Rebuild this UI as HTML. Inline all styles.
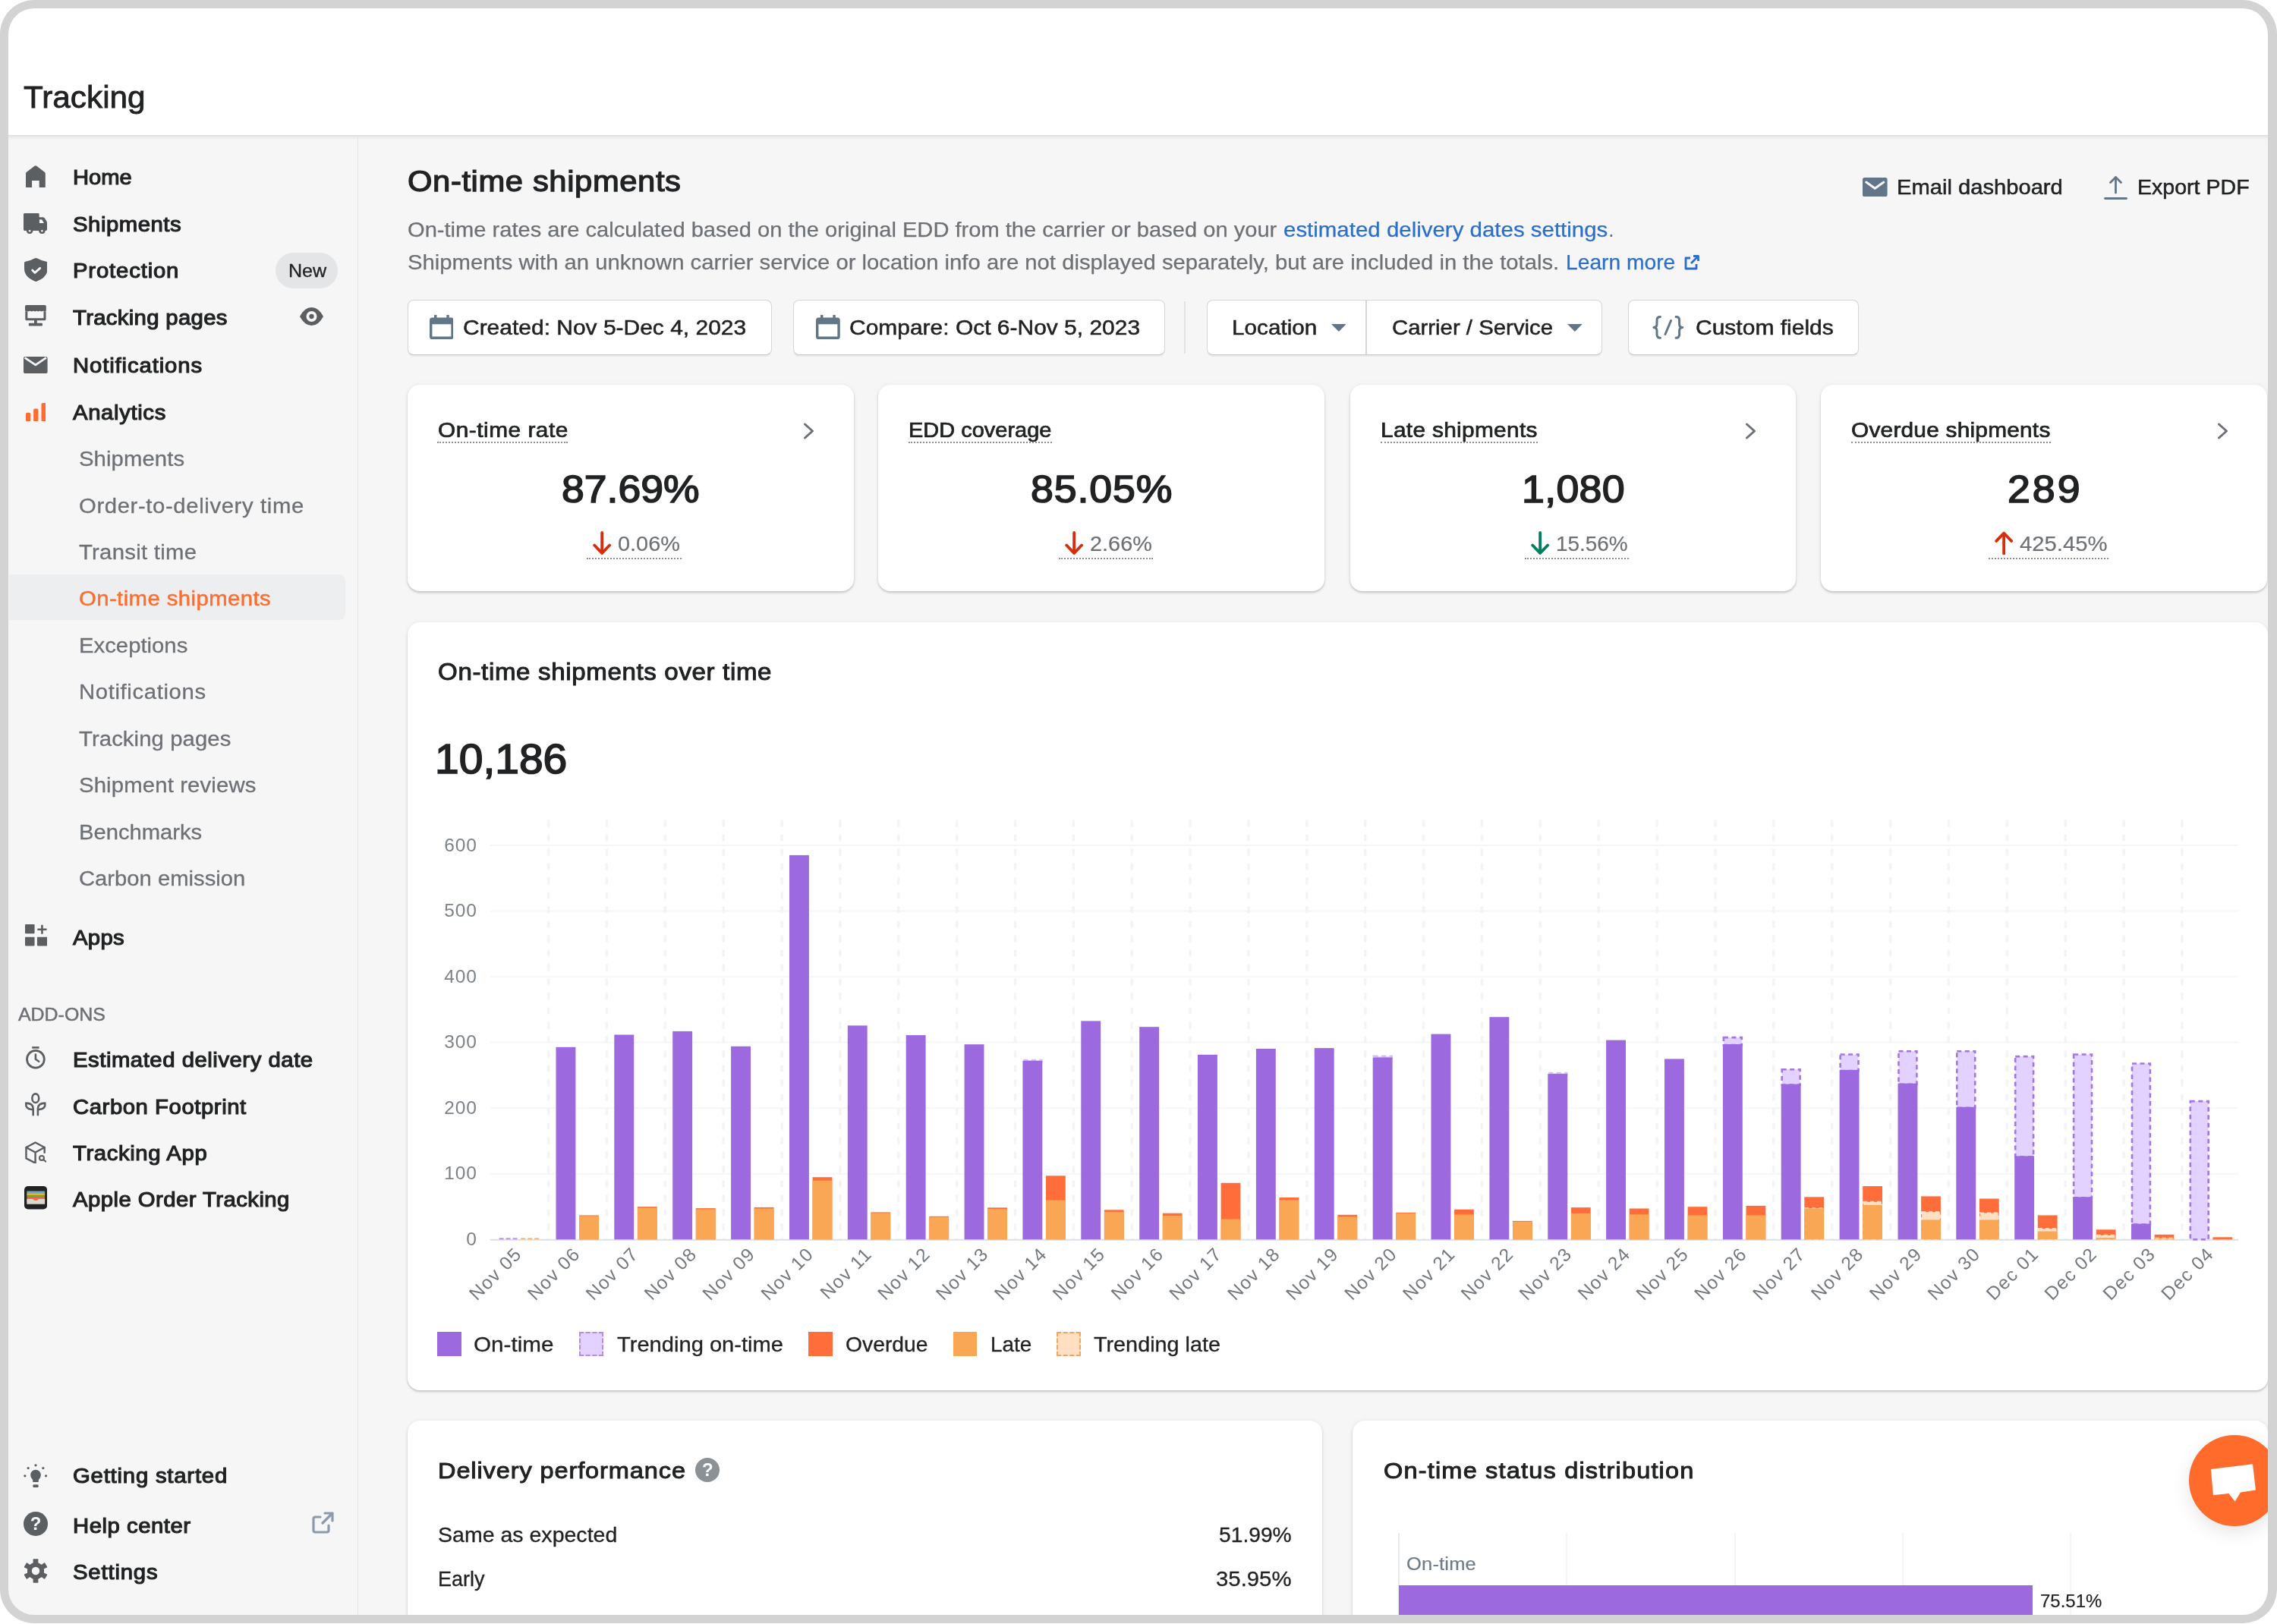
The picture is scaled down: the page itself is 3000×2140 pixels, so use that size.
<!DOCTYPE html>
<html lang="en"><head><meta charset="utf-8"><title>Tracking - On-time shipments</title>
<style>
html,body{margin:0;padding:0}
body{width:3000px;height:2140px;position:relative;overflow:hidden;background:#fff;font-family:"Liberation Sans", sans-serif;}
#app{position:absolute;left:0;top:0;width:3000px;height:2140px;overflow:hidden;background:#f6f6f7;will-change:transform}
#frame{position:absolute;left:0;top:0;width:3000px;height:2139px;box-sizing:border-box;border:solid #d3d3d3;border-width:11.3px 12px 11px 11.3px;border-radius:45px;box-shadow:0 0 0 60px #fff;pointer-events:none}
.card{position:absolute;background:#fff;border-radius:16px;box-shadow:0 0 6px rgba(23,24,24,.06),0 2px 3px rgba(0,0,0,.18)}
.btn{position:absolute;background:#fff;border:1.6px solid #d3d6da;border-bottom-color:#c3c7cc;box-sizing:border-box;border-radius:8px;box-shadow:0 2px 1px rgba(0,0,0,.05)}
</style></head><body>
<div id="app">
<div style="position:absolute;left:0.0px;top:0.0px;width:3000.0px;height:178.0px;background:#fff;box-shadow:0 1px 0 #dcdcdc,0 3px 5px rgba(0,0,0,.08)"></div>
<span style="position:absolute;white-space:pre;left:31.4px;top:103.7px;font-size:40px;line-height:48.00px;font-weight:400;color:#202223;letter-spacing:0.000px;-webkit-text-stroke:0.8px #202223;transform:scaleX(1.0572);transform-origin:0 50%;">Tracking</span>
<div style="position:absolute;left:470.6px;top:180.0px;width:1.6px;height:1960.0px;background:#e3e5e8"></div>
<div style="position:absolute;left:12.0px;top:757.0px;width:442.6px;height:59.6px;background:#edeeef;border-radius:0 8px 8px 0"></div>
<span style="position:absolute;white-space:pre;left:95.8px;top:218.3px;font-size:27px;line-height:32.40px;font-weight:400;color:#202223;letter-spacing:0.000px;-webkit-text-stroke:1.1px #202223;transform:scaleX(1.0787);transform-origin:0 50%;">Home</span>
<span style="position:absolute;white-space:pre;left:95.8px;top:279.7px;font-size:27px;line-height:32.40px;font-weight:400;color:#202223;letter-spacing:0.481px;-webkit-text-stroke:1.1px #202223;transform:scaleX(1.0850);transform-origin:0 50%;">Shipments</span>
<span style="position:absolute;white-space:pre;left:95.8px;top:341.1px;font-size:27px;line-height:32.40px;font-weight:400;color:#202223;letter-spacing:0.767px;-webkit-text-stroke:1.1px #202223;transform:scaleX(1.0850);transform-origin:0 50%;">Protection</span>
<span style="position:absolute;white-space:pre;left:95.8px;top:402.5px;font-size:27px;line-height:32.40px;font-weight:400;color:#202223;letter-spacing:0.297px;-webkit-text-stroke:1.1px #202223;transform:scaleX(1.0850);transform-origin:0 50%;">Tracking pages</span>
<span style="position:absolute;white-space:pre;left:95.8px;top:466.1px;font-size:27px;line-height:32.40px;font-weight:400;color:#202223;letter-spacing:0.808px;-webkit-text-stroke:1.1px #202223;transform:scaleX(1.0850);transform-origin:0 50%;">Notifications</span>
<span style="position:absolute;white-space:pre;left:95.8px;top:527.6px;font-size:27px;line-height:32.40px;font-weight:400;color:#202223;letter-spacing:0.584px;-webkit-text-stroke:1.1px #202223;transform:scaleX(1.0850);transform-origin:0 50%;">Analytics</span>
<span style="position:absolute;white-space:pre;left:103.7px;top:589.0px;font-size:27px;line-height:32.40px;font-weight:400;color:#6d7175;letter-spacing:0.078px;-webkit-text-stroke:0.3px #6d7175;transform:scaleX(1.0850);transform-origin:0 50%;">Shipments</span>
<span style="position:absolute;white-space:pre;left:103.7px;top:650.5px;font-size:27px;line-height:32.40px;font-weight:400;color:#6d7175;letter-spacing:0.568px;-webkit-text-stroke:0.3px #6d7175;transform:scaleX(1.0850);transform-origin:0 50%;">Order-to-delivery time</span>
<span style="position:absolute;white-space:pre;left:103.7px;top:711.9px;font-size:27px;line-height:32.40px;font-weight:400;color:#6d7175;letter-spacing:0.257px;-webkit-text-stroke:0.3px #6d7175;transform:scaleX(1.0850);transform-origin:0 50%;">Transit time</span>
<span style="position:absolute;white-space:pre;left:103.7px;top:773.4px;font-size:27px;line-height:32.40px;font-weight:400;color:#ff6d2e;letter-spacing:0.390px;-webkit-text-stroke:0.5px #ff6d2e;transform:scaleX(1.0850);transform-origin:0 50%;">On-time shipments</span>
<span style="position:absolute;white-space:pre;left:103.7px;top:834.8px;font-size:27px;line-height:32.40px;font-weight:400;color:#6d7175;letter-spacing:0.000px;-webkit-text-stroke:0.3px #6d7175;transform:scaleX(1.0850);transform-origin:0 50%;">Exceptions</span>
<span style="position:absolute;white-space:pre;left:103.7px;top:896.3px;font-size:27px;line-height:32.40px;font-weight:400;color:#6d7175;letter-spacing:0.578px;-webkit-text-stroke:0.3px #6d7175;transform:scaleX(1.0850);transform-origin:0 50%;">Notifications</span>
<span style="position:absolute;white-space:pre;left:103.7px;top:957.7px;font-size:27px;line-height:32.40px;font-weight:400;color:#6d7175;letter-spacing:0.084px;-webkit-text-stroke:0.3px #6d7175;transform:scaleX(1.0850);transform-origin:0 50%;">Tracking pages</span>
<span style="position:absolute;white-space:pre;left:103.7px;top:1019.2px;font-size:27px;line-height:32.40px;font-weight:400;color:#6d7175;letter-spacing:0.135px;-webkit-text-stroke:0.3px #6d7175;transform:scaleX(1.0850);transform-origin:0 50%;">Shipment reviews</span>
<span style="position:absolute;white-space:pre;left:103.7px;top:1080.6px;font-size:27px;line-height:32.40px;font-weight:400;color:#6d7175;letter-spacing:0.000px;-webkit-text-stroke:0.3px #6d7175;transform:scaleX(1.0809);transform-origin:0 50%;">Benchmarks</span>
<span style="position:absolute;white-space:pre;left:103.7px;top:1142.1px;font-size:27px;line-height:32.40px;font-weight:400;color:#6d7175;letter-spacing:0.000px;-webkit-text-stroke:0.3px #6d7175;transform:scaleX(1.0825);transform-origin:0 50%;">Carbon emission</span>
<span style="position:absolute;white-space:pre;left:95.8px;top:1219.7px;font-size:27px;line-height:32.40px;font-weight:400;color:#202223;letter-spacing:0.252px;-webkit-text-stroke:1.1px #202223;transform:scaleX(1.0850);transform-origin:0 50%;">Apps</span>
<span style="position:absolute;white-space:pre;left:23.8px;top:1322.6px;font-size:23.5px;line-height:28.20px;font-weight:400;color:#6d7175;letter-spacing:0.000px;-webkit-text-stroke:0.5px #6d7175;transform:scaleX(1.0602);transform-origin:0 50%;">ADD-ONS</span>
<span style="position:absolute;white-space:pre;left:95.8px;top:1381.2px;font-size:27px;line-height:32.40px;font-weight:400;color:#202223;letter-spacing:0.486px;-webkit-text-stroke:1.1px #202223;transform:scaleX(1.0850);transform-origin:0 50%;">Estimated delivery date</span>
<span style="position:absolute;white-space:pre;left:95.8px;top:1442.6px;font-size:27px;line-height:32.40px;font-weight:400;color:#202223;letter-spacing:0.514px;-webkit-text-stroke:1.1px #202223;transform:scaleX(1.0850);transform-origin:0 50%;">Carbon Footprint</span>
<span style="position:absolute;white-space:pre;left:95.8px;top:1503.6px;font-size:27px;line-height:32.40px;font-weight:400;color:#202223;letter-spacing:0.569px;-webkit-text-stroke:1.1px #202223;transform:scaleX(1.0850);transform-origin:0 50%;">Tracking App</span>
<span style="position:absolute;white-space:pre;left:95.8px;top:1565.0px;font-size:27px;line-height:32.40px;font-weight:400;color:#202223;letter-spacing:0.417px;-webkit-text-stroke:1.1px #202223;transform:scaleX(1.0850);transform-origin:0 50%;">Apple Order Tracking</span>
<span style="position:absolute;white-space:pre;left:95.8px;top:1929.1px;font-size:27px;line-height:32.40px;font-weight:400;color:#202223;letter-spacing:0.727px;-webkit-text-stroke:1.1px #202223;transform:scaleX(1.0850);transform-origin:0 50%;">Getting started</span>
<span style="position:absolute;white-space:pre;left:95.8px;top:1995.0px;font-size:27px;line-height:32.40px;font-weight:400;color:#202223;letter-spacing:0.478px;-webkit-text-stroke:1.1px #202223;transform:scaleX(1.0850);transform-origin:0 50%;">Help center</span>
<span style="position:absolute;white-space:pre;left:95.8px;top:2056.0px;font-size:27px;line-height:32.40px;font-weight:400;color:#202223;letter-spacing:0.756px;-webkit-text-stroke:1.1px #202223;transform:scaleX(1.0850);transform-origin:0 50%;">Settings</span>
<div style="position:absolute;left:363.2px;top:333.2px;width:82.3px;height:47.3px;background:#e4e5e7;border-radius:24px"></div>
<span style="position:absolute;white-space:pre;left:379.6px;top:343.1px;font-size:24px;line-height:28.80px;font-weight:400;color:#202223;letter-spacing:0.000px;-webkit-text-stroke:0.3px #202223;transform:scaleX(1.0455);transform-origin:0 50%;">New</span>
<svg style="position:absolute;left:34.2px;top:217.7px;" width="25.8" height="29.6" viewBox="0 0 175 200" preserveAspectRatio="none"><path fill="#5c5f62" d="M78 5 Q87.5 -3 97 5 L170 60 Q175 64 175 72 V188 Q175 200 163 200 H120 V135 H55 V200 H12 Q0 200 0 188 V72 Q0 64 5 60 Z"/></svg>
<svg style="position:absolute;left:31.2px;top:280.5px;" width="31.0" height="27.4" viewBox="0 0 210 185" preserveAspectRatio="none"><path fill="#5c5f62" d="M10 0 H130 Q140 0 140 10 V35 H170 Q182 35 190 45 L205 70 Q210 78 210 88 V145 Q210 155 200 155 H194 A29 29 0 0 1 136 155 H84 A29 29 0 0 1 26 155 H10 Q0 155 0 145 V10 Q0 0 10 0 Z M142 56 V88 H182 L168 62 Q165 56 158 56 Z"/><circle cx="55" cy="157" r="9" fill="#f6f6f7"/><circle cx="165" cy="157" r="9" fill="#f6f6f7"/></svg>
<svg style="position:absolute;left:31.5px;top:339.6px;" width="30.7" height="31.1" viewBox="0 0 210 210" preserveAspectRatio="none"><path fill="#5c5f62" d="M105 0 Q112 0 118 4 Q160 28 200 32 Q210 33 210 44 V95 Q210 170 112 208 Q105 211 98 208 Q0 170 0 95 V44 Q0 33 10 32 Q50 28 92 4 Q98 0 105 0 Z"/><path d="M73 108 L96 131 L142 90" fill="none" stroke="#f6f6f7" stroke-width="19" stroke-linecap="round" stroke-linejoin="round"/></svg>
<svg style="position:absolute;left:33.1px;top:402.1px;" width="27.8" height="29.1" viewBox="0 0 185 195" preserveAspectRatio="none"><path fill="#5c5f62" d="M12 0 H173 Q185 0 185 12 V50 Q175 62 160 50 Q146 62 131 50 Q116 62 102 50 Q88 62 73 50 Q58 62 44 50 Q30 62 0 50 V12 Q0 0 12 0 Z"/><path fill="none" stroke="#5c5f62" stroke-width="20" stroke-linejoin="round" d="M12 55 V125 H173 V55"/><rect x="80" y="125" width="25" height="40" fill="#5c5f62"/><rect x="32" y="160" width="121" height="24" rx="8" fill="#5c5f62"/></svg>
<svg style="position:absolute;left:31.0px;top:469.6px;" width="31.6" height="22.1" viewBox="0 0 150 105" preserveAspectRatio="none"><rect x="0" y="0" width="150" height="105" rx="10" fill="#5c5f62"/><path d="M8 6 L75 52 L142 6" fill="none" stroke="#f6f6f7" stroke-width="13" stroke-linejoin="round"/></svg>
<svg style="position:absolute;left:33.7px;top:530.7px;" width="26.8" height="24.3" viewBox="0 0 127 115" preserveAspectRatio="none"><rect x="0" y="60" width="30" height="55" rx="9" fill="#ff6d2e"/><rect x="48" y="35" width="30" height="80" rx="9" fill="#ff6d2e"/><rect x="97" y="0" width="30" height="115" rx="9" fill="#ff6d2e"/></svg>
<svg style="position:absolute;left:395.2px;top:404.9px;" width="31.0" height="24.0" viewBox="0 0 147 114" preserveAspectRatio="none"><path fill="#5c5f62" d="M0 57 Q30 0 73.5 0 Q117 0 147 57 Q117 114 73.5 114 Q30 114 0 57 Z"/><circle cx="73.5" cy="57" r="33" fill="#f6f6f7"/><circle cx="73.5" cy="57" r="15" fill="#5c5f62"/></svg>
<svg style="position:absolute;left:32.6px;top:1218.3px;" width="29.2" height="28.4" viewBox="0 0 216 210" preserveAspectRatio="none"><rect x="0" y="0" width="93" height="90" rx="6" fill="#5c5f62"/><rect x="0" y="123" width="93" height="87" rx="6" fill="#5c5f62"/><rect x="118" y="123" width="98" height="87" rx="6" fill="#5c5f62"/><path d="M166 5 V95 M121 50 H211" stroke="#5c5f62" stroke-width="19" fill="none"/></svg>
<svg style="position:absolute;left:33.3px;top:1378.0px;" width="28.0" height="32.0" viewBox="0 0 28 32" preserveAspectRatio="none"><circle cx="13.9" cy="17.7" r="11.4" fill="none" stroke="#5c5f62" stroke-width="2.8"/><path d="M9.2 2.4 H18.6" stroke="#5c5f62" stroke-width="2.6" fill="none"/><path d="M13.9 11.5 V17.7 L18.2 20.8" stroke="#5c5f62" stroke-width="2.6" fill="none" stroke-linecap="round" stroke-linejoin="round"/></svg>
<svg style="position:absolute;left:32.3px;top:1440.3px;" width="29.6" height="30.5" viewBox="0 0 240 247" preserveAspectRatio="none"><g fill="none" stroke="#5c5f62" stroke-width="21" stroke-linecap="round" stroke-linejoin="round"><ellipse cx="120" cy="58" rx="36" ry="47"/><path d="M95 237 V170 Q95 110 18 110 Q12 175 80 178"/><path d="M145 237 V170 Q145 110 222 110 Q228 175 160 178"/></g></svg>
<svg style="position:absolute;left:32.9px;top:1503.5px;" width="28.4" height="29.8" viewBox="0 0 230 242" preserveAspectRatio="none"><g fill="none" stroke="#5c5f62" stroke-width="20" stroke-linecap="round" stroke-linejoin="round"><path d="M110 232 L12 182 V65 L110 12 L208 65 V120"/><path d="M12 65 L110 118 L208 65 M110 118 V232"/><circle cx="178" cy="178" r="24" stroke-width="17"/><path d="M197 197 L222 216" stroke-width="17"/></g></svg>
<svg style="position:absolute;left:31.7px;top:1563.2px;" width="30.2" height="30.5" viewBox="0 0 245 248" preserveAspectRatio="none"><rect x="0" y="0" width="245" height="248" rx="40" fill="#222"/><rect x="27" y="53" width="193" height="30" fill="#6fa8c7"/><rect x="27" y="78" width="193" height="24" fill="#e5b521"/><rect x="27" y="100" width="193" height="20" fill="#7aa83c"/><rect x="27" y="118" width="193" height="50" fill="#f06a55"/><path d="M27 138 H85 Q95 138 100 146 Q123 165 146 146 Q151 138 161 138 H220 V193 H27 Z" fill="#dcd8cc"/></svg>
<svg style="position:absolute;left:31.1px;top:1928.5px;" width="31.4" height="31.8" viewBox="0 0 255 258" preserveAspectRatio="none"><path fill="#5c5f62" d="M130 62 A56 56 0 0 1 186 118 Q186 145 165 165 Q160 172 160 195 H100 Q100 172 95 165 Q74 145 74 118 A56 56 0 0 1 130 62 Z"/><rect x="100" y="222" width="60" height="30" rx="12" fill="#5c5f62"/><g fill="#5c5f62"><circle cx="130" cy="15" r="13"/><circle cx="50" cy="45" r="13"/><circle cx="210" cy="45" r="13"/><circle cx="15" cy="128" r="13"/><circle cx="240" cy="128" r="13"/></g></svg>
<div style="position:absolute;left:31.3px;top:1992.4px;width:31.6px;height:31.6px;border-radius:50%;background:#5c5f62"></div>
<span style="position:absolute;white-space:pre;left:39.8px;top:1994.3px;font-size:24px;line-height:28.80px;font-weight:700;color:#f6f6f7;letter-spacing:0.000px;">?</span>
<svg style="position:absolute;left:31.4px;top:2054.2px;" width="32.0" height="32.0" viewBox="0 0 32 32" preserveAspectRatio="none"><path fill="#5c5f62" stroke="#5c5f62" stroke-width="2" stroke-linejoin="round" d="M13.8 5.7 L13.5 1.2 L18.5 1.2 L18.2 5.7 L23.8 9.0 L27.6 6.4 L30.1 10.8 L26.0 12.7 L26.0 19.3 L30.1 21.2 L27.6 25.6 L23.8 23.0 L18.2 26.3 L18.5 30.8 L13.5 30.8 L13.8 26.3 L8.2 23.0 L4.4 25.6 L1.9 21.2 L6.0 19.3 L6.0 12.7 L1.9 10.8 L4.4 6.4 L8.2 9.0 Z"/><circle cx="16" cy="16" r="5.2" fill="#f6f6f7"/></svg>
<svg style="position:absolute;left:411.4px;top:1992.0px;" width="29.0" height="29.0" viewBox="0 0 29 29" preserveAspectRatio="none"><g fill="none" stroke="#8c9bab" stroke-width="3.2" stroke-linecap="round" stroke-linejoin="round"><path d="M11 7 H4.5 Q2 7 2 9.5 V24.5 Q2 27 4.5 27 H19.5 Q22 27 22 24.5 V18"/><path d="M17 2 H27 V12 M27 2 L14 15"/></g></svg>
<span style="position:absolute;white-space:pre;left:537.3px;top:216.1px;font-size:38.5px;line-height:46.20px;font-weight:400;color:#202223;letter-spacing:0.545px;-webkit-text-stroke:1.25px #202223;transform:scaleX(1.0850);transform-origin:0 50%;">On-time shipments</span>
<span style="position:absolute;white-space:pre;left:537.3px;top:286.1px;font-size:27.5px;line-height:33.00px;font-weight:400;color:#6d7175;letter-spacing:0.000px;-webkit-text-stroke:0.25px #6d7175;transform:scaleX(1.0583);transform-origin:0 50%;">On-time rates are calculated based on the original EDD from the carrier or based on your </span>
<span style="position:absolute;white-space:pre;left:1690.7px;top:286.1px;font-size:27.5px;line-height:33.00px;font-weight:400;color:#2c6ecb;letter-spacing:0.000px;-webkit-text-stroke:0.25px #2c6ecb;transform:scaleX(1.0711);transform-origin:0 50%;">estimated delivery dates settings</span>
<span style="position:absolute;white-space:pre;left:2119.0px;top:286.1px;font-size:27.5px;line-height:33.00px;font-weight:400;color:#6d7175;letter-spacing:0.000px;">.</span>
<span style="position:absolute;white-space:pre;left:537.3px;top:329.2px;font-size:27.5px;line-height:33.00px;font-weight:400;color:#6d7175;letter-spacing:0.000px;-webkit-text-stroke:0.25px #6d7175;transform:scaleX(1.0642);transform-origin:0 50%;">Shipments with an unknown carrier service or location info are not displayed separately, but are included in the totals. </span>
<span style="position:absolute;white-space:pre;left:2062.7px;top:329.2px;font-size:27.5px;line-height:33.00px;font-weight:400;color:#2c6ecb;letter-spacing:0.000px;-webkit-text-stroke:0.25px #2c6ecb;transform:scaleX(1.0260);transform-origin:0 50%;">Learn more</span>
<svg style="position:absolute;left:2219.4px;top:335.5px;" width="20.0" height="20.0" viewBox="0 0 20 20" preserveAspectRatio="none"><g fill="none" stroke="#2c6ecb" stroke-width="2.8" stroke-linejoin="round"><path d="M8 4 H2 V18 H16 V12"/><path d="M12 1.5 H18.5 V8 M18.5 1.5 L9 11"/></g></svg>
<svg style="position:absolute;left:2454.0px;top:234.0px;" width="32.6" height="25.0" viewBox="0 0 150 115" preserveAspectRatio="none"><rect x="0" y="0" width="150" height="115" rx="12" fill="#637689"/><path d="M22 28 L75 66 L128 28" fill="none" stroke="#f6f6f7" stroke-width="14" stroke-linejoin="round" stroke-linecap="round"/></svg>
<span style="position:absolute;white-space:pre;left:2499.0px;top:230.3px;font-size:27.5px;line-height:33.00px;font-weight:400;color:#202223;letter-spacing:0.000px;-webkit-text-stroke:0.5px #202223;transform:scaleX(1.0602);transform-origin:0 50%;">Email dashboard</span>
<svg style="position:absolute;left:2772.0px;top:230.6px;" width="31.0" height="32.4" viewBox="0 0 31 32.4" preserveAspectRatio="none"><g fill="none" stroke="#637689" stroke-width="2.8" stroke-linecap="round" stroke-linejoin="round"><path d="M15.5 23 V2.5 M8.5 9.5 L15.5 2.5 L22.5 9.5"/><path d="M1.5 30.5 H29.5"/></g></svg>
<span style="position:absolute;white-space:pre;left:2816.0px;top:230.3px;font-size:27.5px;line-height:33.00px;font-weight:400;color:#202223;letter-spacing:0.000px;-webkit-text-stroke:0.5px #202223;transform:scaleX(1.0385);transform-origin:0 50%;">Export PDF</span>
<div class="btn" style="left:536.5px;top:395.0px;width:480.5px;height:72.6px"></div>
<svg style="position:absolute;left:565.5px;top:414.9px;" width="31.8" height="32.0" viewBox="0 0 74 71" preserveAspectRatio="none"><path fill="#637689" d="M14 0 H22 V8 H52 V0 H60 V8 H66 Q74 8 74 16 V63 Q74 71 66 71 H8 Q0 71 0 63 V16 Q0 8 8 8 H14 Z M8 27 V63 H66 V27 Z"/></svg>
<span style="position:absolute;white-space:pre;left:609.8px;top:414.8px;font-size:28px;line-height:33.60px;font-weight:400;color:#202223;letter-spacing:0.000px;-webkit-text-stroke:0.5px #202223;transform:scaleX(1.0704);transform-origin:0 50%;">Created: Nov 5-Dec 4, 2023</span>
<div class="btn" style="left:1045px;top:395.0px;width:490.0px;height:72.6px"></div>
<svg style="position:absolute;left:1074.9px;top:414.9px;" width="31.8" height="32.0" viewBox="0 0 74 71" preserveAspectRatio="none"><path fill="#637689" d="M14 0 H22 V8 H52 V0 H60 V8 H66 Q74 8 74 16 V63 Q74 71 66 71 H8 Q0 71 0 63 V16 Q0 8 8 8 H14 Z M8 27 V63 H66 V27 Z"/></svg>
<span style="position:absolute;white-space:pre;left:1119.2px;top:414.8px;font-size:28px;line-height:33.60px;font-weight:400;color:#202223;letter-spacing:0.000px;-webkit-text-stroke:0.5px #202223;transform:scaleX(1.0703);transform-origin:0 50%;">Compare: Oct 6-Nov 5, 2023</span>
<div style="position:absolute;left:1560.0px;top:397.0px;width:2.0px;height:69.0px;background:#e1e3e5"></div>
<div class="btn" style="left:1589.7px;top:395.0px;width:521.3px;height:72.6px"></div>
<div style="position:absolute;left:1799.3px;top:396.0px;width:1.6px;height:70.6px;background:#d3d6da"></div>
<span style="position:absolute;white-space:pre;left:1622.7px;top:414.8px;font-size:28px;line-height:33.60px;font-weight:400;color:#202223;letter-spacing:0.000px;-webkit-text-stroke:0.5px #202223;transform:scaleX(1.0607);transform-origin:0 50%;">Location</span>
<svg style="position:absolute;left:1753.5px;top:427.3px;" width="19.8" height="10.0" viewBox="0 0 20 10" preserveAspectRatio="none"><path fill="#637689" d="M0 0 H20 L10 10 Z"/></svg>
<span style="position:absolute;white-space:pre;left:1833.5px;top:414.8px;font-size:28px;line-height:33.60px;font-weight:400;color:#202223;letter-spacing:0.000px;-webkit-text-stroke:0.5px #202223;transform:scaleX(1.0486);transform-origin:0 50%;">Carrier / Service</span>
<svg style="position:absolute;left:2065.3px;top:427.3px;" width="19.8" height="10.0" viewBox="0 0 20 10" preserveAspectRatio="none"><path fill="#637689" d="M0 0 H20 L10 10 Z"/></svg>
<div class="btn" style="left:2145px;top:395.0px;width:304.4px;height:72.6px"></div>
<span style="position:absolute;white-space:pre;left:2234.4px;top:414.8px;font-size:28px;line-height:33.60px;font-weight:400;color:#202223;letter-spacing:0.000px;-webkit-text-stroke:0.5px #202223;transform:scaleX(1.0718);transform-origin:0 50%;">Custom fields</span>
<svg style="position:absolute;left:2177.0px;top:416.0px;" width="41.6" height="30.8" viewBox="0 0 41.6 30.8" preserveAspectRatio="none"><g fill="none" stroke="#637689" stroke-width="3" stroke-linecap="round" stroke-linejoin="round"><path d="M10.5 1.5 Q6 1.5 6 6 V11 Q6 15.4 1.8 15.4 Q6 15.4 6 19.8 V24.8 Q6 29.3 10.5 29.3"/><path d="M31.1 1.5 Q35.6 1.5 35.6 6 V11 Q35.6 15.4 39.8 15.4 Q35.6 15.4 35.6 19.8 V24.8 Q35.6 29.3 31.1 29.3"/><path d="M24.5 6.5 L17 24.5"/></g></svg>
<div class="card" style="left:536.6px;top:507.0px;width:588.2px;height:272.0px"></div>
<span style="position:absolute;white-space:pre;left:576.6px;top:549.6px;font-size:27.5px;line-height:33.00px;font-weight:400;color:#202223;letter-spacing:0.459px;-webkit-text-stroke:0.7px #202223;transform:scaleX(1.0850);transform-origin:0 50%;">On-time rate</span>
<div style="position:absolute;left:576.1px;top:582.0px;width:172.3px;height:2.0px;border-top:2px dotted #8c9196;box-sizing:border-box"></div>
<span style="position:absolute;white-space:pre;left:740.0px;top:615.1px;font-size:49.5px;line-height:59.40px;font-weight:400;color:#202223;letter-spacing:0.000px;-webkit-text-stroke:1.55px #202223;transform:scaleX(1.0811);transform-origin:0 50%;">87.69%</span>
<span style="position:absolute;white-space:pre;left:814.0px;top:699.8px;font-size:27.5px;line-height:33.00px;font-weight:400;color:#6d7175;letter-spacing:0.000px;-webkit-text-stroke:0.2px #6d7175;transform:scaleX(1.0515);transform-origin:0 50%;">0.06%</span>
<div style="position:absolute;left:773.0px;top:734.5px;width:124.7px;height:2.0px;border-top:2px dotted #8c9196;box-sizing:border-box"></div>
<svg style="position:absolute;left:781.0px;top:699.8px;" width="24.3" height="31.4" viewBox="0 0 24.3 31.4" preserveAspectRatio="none"><path d="M12.15 2 V28.5 M2.2 18.5 L12.15 28.9 L22.1 18.5" fill="none" stroke="#d82c0d" stroke-width="3.8" stroke-linecap="round" stroke-linejoin="round"/></svg>
<svg style="position:absolute;left:1058.0px;top:557.0px;" width="15.8" height="22.0" viewBox="0 0 15.8 22" preserveAspectRatio="none"><path d="M2.5 2 L12.5 11 L2.5 20" fill="none" stroke="#6d7175" stroke-width="3" stroke-linecap="round" stroke-linejoin="round"/></svg>
<div class="card" style="left:1157.1px;top:507.0px;width:588.3px;height:272.0px"></div>
<span style="position:absolute;white-space:pre;left:1197.1px;top:549.6px;font-size:27.5px;line-height:33.00px;font-weight:400;color:#202223;letter-spacing:0.000px;-webkit-text-stroke:0.7px #202223;transform:scaleX(1.0534);transform-origin:0 50%;">EDD coverage</span>
<div style="position:absolute;left:1196.6px;top:582.0px;width:189.4px;height:2.0px;border-top:2px dotted #8c9196;box-sizing:border-box"></div>
<span style="position:absolute;white-space:pre;left:1358.0px;top:615.1px;font-size:49.5px;line-height:59.40px;font-weight:400;color:#202223;letter-spacing:0.781px;-webkit-text-stroke:1.55px #202223;transform:scaleX(1.0850);transform-origin:0 50%;">85.05%</span>
<span style="position:absolute;white-space:pre;left:1435.5px;top:699.8px;font-size:27.5px;line-height:33.00px;font-weight:400;color:#6d7175;letter-spacing:0.000px;-webkit-text-stroke:0.2px #6d7175;transform:scaleX(1.0502);transform-origin:0 50%;">2.66%</span>
<div style="position:absolute;left:1395.0px;top:734.5px;width:124.1px;height:2.0px;border-top:2px dotted #8c9196;box-sizing:border-box"></div>
<svg style="position:absolute;left:1402.6px;top:699.8px;" width="24.3" height="31.4" viewBox="0 0 24.3 31.4" preserveAspectRatio="none"><path d="M12.15 2 V28.5 M2.2 18.5 L12.15 28.9 L22.1 18.5" fill="none" stroke="#d82c0d" stroke-width="3.8" stroke-linecap="round" stroke-linejoin="round"/></svg>
<div class="card" style="left:1779.0px;top:507.0px;width:587.2px;height:272.0px"></div>
<span style="position:absolute;white-space:pre;left:1819.0px;top:549.6px;font-size:27.5px;line-height:33.00px;font-weight:400;color:#202223;letter-spacing:0.287px;-webkit-text-stroke:0.7px #202223;transform:scaleX(1.0850);transform-origin:0 50%;">Late shipments</span>
<div style="position:absolute;left:1818.5px;top:582.0px;width:207.4px;height:2.0px;border-top:2px dotted #8c9196;box-sizing:border-box"></div>
<span style="position:absolute;white-space:pre;left:2004.8px;top:615.1px;font-size:49.5px;line-height:59.40px;font-weight:400;color:#202223;letter-spacing:0.275px;-webkit-text-stroke:1.55px #202223;transform:scaleX(1.0850);transform-origin:0 50%;">1,080</span>
<span style="position:absolute;white-space:pre;left:2049.8px;top:699.8px;font-size:27.5px;line-height:33.00px;font-weight:400;color:#6d7175;letter-spacing:0.000px;-webkit-text-stroke:0.2px #6d7175;transform:scaleX(1.0152);transform-origin:0 50%;">15.56%</span>
<div style="position:absolute;left:2009.2px;top:734.5px;width:136.8px;height:2.0px;border-top:2px dotted #8c9196;box-sizing:border-box"></div>
<svg style="position:absolute;left:2016.9px;top:699.8px;" width="24.3" height="31.4" viewBox="0 0 24.3 31.4" preserveAspectRatio="none"><path d="M12.15 2 V28.5 M2.2 18.5 L12.15 28.9 L22.1 18.5" fill="none" stroke="#007f5f" stroke-width="3.8" stroke-linecap="round" stroke-linejoin="round"/></svg>
<svg style="position:absolute;left:2299.4px;top:557.0px;" width="15.8" height="22.0" viewBox="0 0 15.8 22" preserveAspectRatio="none"><path d="M2.5 2 L12.5 11 L2.5 20" fill="none" stroke="#6d7175" stroke-width="3" stroke-linecap="round" stroke-linejoin="round"/></svg>
<div class="card" style="left:2399.0px;top:507.0px;width:588.4px;height:272.0px"></div>
<span style="position:absolute;white-space:pre;left:2439.0px;top:549.6px;font-size:27.5px;line-height:33.00px;font-weight:400;color:#202223;letter-spacing:0.206px;-webkit-text-stroke:0.7px #202223;transform:scaleX(1.0850);transform-origin:0 50%;">Overdue shipments</span>
<div style="position:absolute;left:2438.5px;top:582.0px;width:263.3px;height:2.0px;border-top:2px dotted #8c9196;box-sizing:border-box"></div>
<span style="position:absolute;white-space:pre;left:2645.4px;top:615.1px;font-size:49.5px;line-height:59.40px;font-weight:400;color:#202223;letter-spacing:2.758px;-webkit-text-stroke:1.55px #202223;transform:scaleX(1.0850);transform-origin:0 50%;">289</span>
<span style="position:absolute;white-space:pre;left:2660.6px;top:699.8px;font-size:27.5px;line-height:33.00px;font-weight:400;color:#6d7175;letter-spacing:0.000px;-webkit-text-stroke:0.2px #6d7175;transform:scaleX(1.0647);transform-origin:0 50%;">425.45%</span>
<div style="position:absolute;left:2619.8px;top:734.5px;width:157.8px;height:2.0px;border-top:2px dotted #8c9196;box-sizing:border-box"></div>
<svg style="position:absolute;left:2627.5px;top:699.8px;" width="24.3" height="31.4" viewBox="0 0 24.3 31.4" preserveAspectRatio="none"><path d="M12.15 29.4 V2.9 M2.2 12.9 L12.15 2.5 L22.1 12.9" fill="none" stroke="#d82c0d" stroke-width="3.8" stroke-linecap="round" stroke-linejoin="round"/></svg>
<svg style="position:absolute;left:2920.6px;top:557.0px;" width="15.8" height="22.0" viewBox="0 0 15.8 22" preserveAspectRatio="none"><path d="M2.5 2 L12.5 11 L2.5 20" fill="none" stroke="#6d7175" stroke-width="3" stroke-linecap="round" stroke-linejoin="round"/></svg>
<div class="card" style="left:536.6px;top:820px;width:2451.4px;height:1012px"></div>
<span style="position:absolute;white-space:pre;left:576.5px;top:867.1px;font-size:30.5px;line-height:36.60px;font-weight:400;color:#202223;letter-spacing:0.586px;-webkit-text-stroke:0.95px #202223;transform:scaleX(1.0850);transform-origin:0 50%;">On-time shipments over time</span>
<span style="position:absolute;white-space:pre;left:573.0px;top:966.4px;font-size:56px;line-height:67.20px;font-weight:400;color:#202223;letter-spacing:0.000px;-webkit-text-stroke:1.7px #202223;transform:scaleX(1.0176);transform-origin:0 50%;">10,186</span>
<svg style="position:absolute;left:0;top:0" width="3000" height="2140" viewBox="0 0 3000 2140" font-family="Liberation Sans, sans-serif"><path d="M645.7 1546.7 H2949" stroke="#f5f6f8" stroke-width="2" fill="none"/>
<path d="M645.7 1460.2 H2949" stroke="#f5f6f8" stroke-width="2" fill="none"/>
<path d="M645.7 1373.6 H2949" stroke="#f5f6f8" stroke-width="2" fill="none"/>
<path d="M645.7 1287.0 H2949" stroke="#f5f6f8" stroke-width="2" fill="none"/>
<path d="M645.7 1200.4 H2949" stroke="#f5f6f8" stroke-width="2" fill="none"/>
<path d="M645.7 1113.9 H2949" stroke="#f5f6f8" stroke-width="2" fill="none"/>
<path d="M722.6 1080.6 V1633.3" stroke="#f2f4f7" stroke-width="3.5" stroke-dasharray="9 10" fill="none"/>
<path d="M799.4 1080.6 V1633.3" stroke="#f2f4f7" stroke-width="3.5" stroke-dasharray="9 10" fill="none"/>
<path d="M876.3 1080.6 V1633.3" stroke="#f2f4f7" stroke-width="3.5" stroke-dasharray="9 10" fill="none"/>
<path d="M953.2 1080.6 V1633.3" stroke="#f2f4f7" stroke-width="3.5" stroke-dasharray="9 10" fill="none"/>
<path d="M1030.1 1080.6 V1633.3" stroke="#f2f4f7" stroke-width="3.5" stroke-dasharray="9 10" fill="none"/>
<path d="M1106.9 1080.6 V1633.3" stroke="#f2f4f7" stroke-width="3.5" stroke-dasharray="9 10" fill="none"/>
<path d="M1183.8 1080.6 V1633.3" stroke="#f2f4f7" stroke-width="3.5" stroke-dasharray="9 10" fill="none"/>
<path d="M1260.7 1080.6 V1633.3" stroke="#f2f4f7" stroke-width="3.5" stroke-dasharray="9 10" fill="none"/>
<path d="M1337.5 1080.6 V1633.3" stroke="#f2f4f7" stroke-width="3.5" stroke-dasharray="9 10" fill="none"/>
<path d="M1414.4 1080.6 V1633.3" stroke="#f2f4f7" stroke-width="3.5" stroke-dasharray="9 10" fill="none"/>
<path d="M1491.3 1080.6 V1633.3" stroke="#f2f4f7" stroke-width="3.5" stroke-dasharray="9 10" fill="none"/>
<path d="M1568.1 1080.6 V1633.3" stroke="#f2f4f7" stroke-width="3.5" stroke-dasharray="9 10" fill="none"/>
<path d="M1645.0 1080.6 V1633.3" stroke="#f2f4f7" stroke-width="3.5" stroke-dasharray="9 10" fill="none"/>
<path d="M1721.9 1080.6 V1633.3" stroke="#f2f4f7" stroke-width="3.5" stroke-dasharray="9 10" fill="none"/>
<path d="M1798.8 1080.6 V1633.3" stroke="#f2f4f7" stroke-width="3.5" stroke-dasharray="9 10" fill="none"/>
<path d="M1875.6 1080.6 V1633.3" stroke="#f2f4f7" stroke-width="3.5" stroke-dasharray="9 10" fill="none"/>
<path d="M1952.5 1080.6 V1633.3" stroke="#f2f4f7" stroke-width="3.5" stroke-dasharray="9 10" fill="none"/>
<path d="M2029.4 1080.6 V1633.3" stroke="#f2f4f7" stroke-width="3.5" stroke-dasharray="9 10" fill="none"/>
<path d="M2106.2 1080.6 V1633.3" stroke="#f2f4f7" stroke-width="3.5" stroke-dasharray="9 10" fill="none"/>
<path d="M2183.1 1080.6 V1633.3" stroke="#f2f4f7" stroke-width="3.5" stroke-dasharray="9 10" fill="none"/>
<path d="M2260.0 1080.6 V1633.3" stroke="#f2f4f7" stroke-width="3.5" stroke-dasharray="9 10" fill="none"/>
<path d="M2336.8 1080.6 V1633.3" stroke="#f2f4f7" stroke-width="3.5" stroke-dasharray="9 10" fill="none"/>
<path d="M2413.7 1080.6 V1633.3" stroke="#f2f4f7" stroke-width="3.5" stroke-dasharray="9 10" fill="none"/>
<path d="M2490.6 1080.6 V1633.3" stroke="#f2f4f7" stroke-width="3.5" stroke-dasharray="9 10" fill="none"/>
<path d="M2567.4 1080.6 V1633.3" stroke="#f2f4f7" stroke-width="3.5" stroke-dasharray="9 10" fill="none"/>
<path d="M2644.3 1080.6 V1633.3" stroke="#f2f4f7" stroke-width="3.5" stroke-dasharray="9 10" fill="none"/>
<path d="M2721.2 1080.6 V1633.3" stroke="#f2f4f7" stroke-width="3.5" stroke-dasharray="9 10" fill="none"/>
<path d="M2798.1 1080.6 V1633.3" stroke="#f2f4f7" stroke-width="3.5" stroke-dasharray="9 10" fill="none"/>
<path d="M2874.9 1080.6 V1633.3" stroke="#f2f4f7" stroke-width="3.5" stroke-dasharray="9 10" fill="none"/>
<path d="M645.7 1633.8 H2949" stroke="#dde1e6" stroke-width="2" fill="none"/>
<path d="M657.6 1632.3 H681.5" stroke="#9c6ade" stroke-width="2" stroke-dasharray="6 3" opacity=".7"/>
<path d="M686.2 1632.3 H712.0" stroke="#faa755" stroke-width="2" stroke-dasharray="6 3" opacity=".8"/>
<rect x="732.5" y="1379.8" width="25.9" height="253.5" fill="#9c6ade"/>
<rect x="763.1" y="1601.4" width="25.8" height="31.9" fill="#ff6d3b"/>
<rect x="763.1" y="1602.3" width="25.8" height="31.0" fill="#faa755"/>
<rect x="809.3" y="1363.5" width="25.9" height="269.8" fill="#9c6ade"/>
<rect x="839.9" y="1590.2" width="25.8" height="43.1" fill="#ff6d3b"/>
<rect x="839.9" y="1591.7" width="25.8" height="41.6" fill="#faa755"/>
<rect x="886.2" y="1358.9" width="25.9" height="274.4" fill="#9c6ade"/>
<rect x="916.8" y="1592.1" width="25.8" height="41.2" fill="#ff6d3b"/>
<rect x="916.8" y="1593.5" width="25.8" height="39.8" fill="#faa755"/>
<rect x="963.1" y="1378.8" width="25.9" height="254.5" fill="#9c6ade"/>
<rect x="993.7" y="1590.9" width="25.8" height="42.4" fill="#ff6d3b"/>
<rect x="993.7" y="1592.6" width="25.8" height="40.7" fill="#faa755"/>
<rect x="1040.0" y="1126.9" width="25.9" height="506.4" fill="#9c6ade"/>
<rect x="1070.6" y="1551.2" width="25.8" height="82.1" fill="#ff6d3b"/>
<rect x="1070.6" y="1555.7" width="25.8" height="77.6" fill="#faa755"/>
<rect x="1116.8" y="1351.4" width="25.9" height="281.9" fill="#9c6ade"/>
<rect x="1147.4" y="1597.4" width="25.8" height="35.9" fill="#ff6d3b"/>
<rect x="1147.4" y="1598.4" width="25.8" height="34.9" fill="#faa755"/>
<rect x="1193.7" y="1364.1" width="25.9" height="269.2" fill="#9c6ade"/>
<rect x="1224.3" y="1602.8" width="25.8" height="30.5" fill="#ff6d3b"/>
<rect x="1224.3" y="1603.9" width="25.8" height="29.4" fill="#faa755"/>
<rect x="1270.6" y="1376.2" width="25.9" height="257.1" fill="#9c6ade"/>
<rect x="1301.2" y="1591.3" width="25.8" height="42.0" fill="#ff6d3b"/>
<rect x="1301.2" y="1593.0" width="25.8" height="40.3" fill="#faa755"/>
<rect x="1348.4" y="1397.1" width="23.9" height="1.7" fill="#e3d1ff" stroke="#d3bdf7" stroke-width="2.6" stroke-dasharray="6 4.5"/>
<rect x="1347.4" y="1397.8" width="25.9" height="235.5" fill="#9c6ade"/>
<rect x="1378.0" y="1549.3" width="25.8" height="84.0" fill="#ff6d3b"/>
<rect x="1378.0" y="1581.6" width="25.8" height="51.7" fill="#faa755"/>
<rect x="1424.3" y="1345.4" width="25.9" height="287.9" fill="#9c6ade"/>
<rect x="1454.9" y="1594.3" width="25.8" height="39.0" fill="#ff6d3b"/>
<rect x="1454.9" y="1596.9" width="25.8" height="36.4" fill="#faa755"/>
<rect x="1501.2" y="1353.2" width="25.9" height="280.1" fill="#9c6ade"/>
<rect x="1531.8" y="1598.7" width="25.8" height="34.6" fill="#ff6d3b"/>
<rect x="1531.8" y="1602.1" width="25.8" height="31.2" fill="#faa755"/>
<rect x="1578.0" y="1389.8" width="25.9" height="243.5" fill="#9c6ade"/>
<rect x="1608.6" y="1558.8" width="25.8" height="74.5" fill="#ff6d3b"/>
<rect x="1608.6" y="1606.5" width="25.8" height="26.8" fill="#faa755"/>
<rect x="1654.9" y="1382.0" width="25.9" height="251.3" fill="#9c6ade"/>
<rect x="1685.5" y="1578.0" width="25.8" height="55.3" fill="#ff6d3b"/>
<rect x="1685.5" y="1581.4" width="25.8" height="51.9" fill="#faa755"/>
<rect x="1731.8" y="1381.1" width="25.9" height="252.2" fill="#9c6ade"/>
<rect x="1762.4" y="1600.8" width="25.8" height="32.5" fill="#ff6d3b"/>
<rect x="1762.4" y="1603.4" width="25.8" height="29.9" fill="#faa755"/>
<rect x="1809.7" y="1391.9" width="23.9" height="2.6" fill="#e3d1ff" stroke="#d3bdf7" stroke-width="2.6" stroke-dasharray="6 4.5"/>
<rect x="1808.7" y="1393.5" width="25.9" height="239.8" fill="#9c6ade"/>
<rect x="1839.3" y="1597.8" width="25.8" height="35.5" fill="#ff6d3b"/>
<rect x="1839.3" y="1598.7" width="25.8" height="34.6" fill="#faa755"/>
<rect x="1885.5" y="1362.6" width="25.9" height="270.7" fill="#9c6ade"/>
<rect x="1916.1" y="1593.7" width="25.8" height="39.6" fill="#ff6d3b"/>
<rect x="1916.1" y="1600.6" width="25.8" height="32.7" fill="#faa755"/>
<rect x="1962.4" y="1340.2" width="25.9" height="293.1" fill="#9c6ade"/>
<rect x="1993.0" y="1608.9" width="25.8" height="24.4" fill="#ff6d3b"/>
<rect x="1993.0" y="1609.9" width="25.8" height="23.4" fill="#faa755"/>
<rect x="2040.3" y="1414.0" width="23.9" height="2.2" fill="#e3d1ff" stroke="#d3bdf7" stroke-width="2.6" stroke-dasharray="6 4.5"/>
<rect x="2039.3" y="1415.1" width="25.9" height="218.2" fill="#9c6ade"/>
<rect x="2069.9" y="1591.1" width="25.8" height="42.2" fill="#ff6d3b"/>
<rect x="2069.9" y="1598.8" width="25.8" height="34.5" fill="#faa755"/>
<rect x="2116.1" y="1370.6" width="25.9" height="262.7" fill="#9c6ade"/>
<rect x="2146.7" y="1592.5" width="25.8" height="40.8" fill="#ff6d3b"/>
<rect x="2146.7" y="1600.4" width="25.8" height="32.9" fill="#faa755"/>
<rect x="2193.0" y="1395.4" width="25.9" height="237.9" fill="#9c6ade"/>
<rect x="2223.6" y="1590.2" width="25.8" height="43.1" fill="#ff6d3b"/>
<rect x="2223.6" y="1601.4" width="25.8" height="31.9" fill="#faa755"/>
<rect x="2270.9" y="1367.1" width="23.9" height="10.0" fill="#e3d1ff" stroke="#a377e2" stroke-width="2.6" stroke-dasharray="6 4.5"/>
<rect x="2269.9" y="1376.0" width="25.9" height="257.3" fill="#9c6ade"/>
<rect x="2300.5" y="1588.9" width="25.8" height="44.4" fill="#ff6d3b"/>
<rect x="2300.5" y="1601.4" width="25.8" height="31.9" fill="#faa755"/>
<rect x="2347.7" y="1409.2" width="23.9" height="20.3" fill="#e3d1ff" stroke="#a377e2" stroke-width="2.6" stroke-dasharray="6 4.5"/>
<rect x="2346.7" y="1428.6" width="25.9" height="204.7" fill="#9c6ade"/>
<rect x="2377.3" y="1577.3" width="25.8" height="56.0" fill="#ff6d3b"/>
<rect x="2378.3" y="1592.2" width="23.8" height="41.1" fill="#ffdfc2" stroke="#ffe9d6" stroke-width="2" stroke-dasharray="5 4"/>
<rect x="2377.3" y="1592.4" width="25.8" height="40.9" fill="#faa755"/>
<rect x="2424.6" y="1389.5" width="23.9" height="21.5" fill="#e3d1ff" stroke="#a377e2" stroke-width="2.6" stroke-dasharray="6 4.5"/>
<rect x="2423.6" y="1409.9" width="25.9" height="223.4" fill="#9c6ade"/>
<rect x="2454.2" y="1563.0" width="25.8" height="70.3" fill="#ff6d3b"/>
<rect x="2455.2" y="1583.8" width="23.8" height="49.5" fill="#ffdfc2" stroke="#ffe9d6" stroke-width="2" stroke-dasharray="5 4"/>
<rect x="2454.2" y="1588.0" width="25.8" height="45.3" fill="#faa755"/>
<rect x="2501.5" y="1385.2" width="23.9" height="43.5" fill="#e3d1ff" stroke="#a377e2" stroke-width="2.6" stroke-dasharray="6 4.5"/>
<rect x="2500.5" y="1427.7" width="25.9" height="205.6" fill="#9c6ade"/>
<rect x="2531.1" y="1576.4" width="25.8" height="56.9" fill="#ff6d3b"/>
<rect x="2532.1" y="1597.2" width="23.8" height="36.1" fill="#ffdfc2" stroke="#ffe9d6" stroke-width="2" stroke-dasharray="5 4"/>
<rect x="2531.1" y="1607.4" width="25.8" height="25.9" fill="#faa755"/>
<rect x="2578.3" y="1385.2" width="23.9" height="74.6" fill="#e3d1ff" stroke="#a377e2" stroke-width="2.6" stroke-dasharray="6 4.5"/>
<rect x="2577.3" y="1458.8" width="25.9" height="174.5" fill="#9c6ade"/>
<rect x="2607.9" y="1579.5" width="25.8" height="53.8" fill="#ff6d3b"/>
<rect x="2608.9" y="1598.5" width="23.8" height="34.8" fill="#ffdfc2" stroke="#ffe9d6" stroke-width="2" stroke-dasharray="5 4"/>
<rect x="2607.9" y="1607.4" width="25.8" height="25.9" fill="#faa755"/>
<rect x="2655.2" y="1392.1" width="23.9" height="132.3" fill="#e3d1ff" stroke="#a377e2" stroke-width="2.6" stroke-dasharray="6 4.5"/>
<rect x="2654.2" y="1523.4" width="25.9" height="109.9" fill="#9c6ade"/>
<rect x="2684.8" y="1601.4" width="25.8" height="31.9" fill="#ff6d3b"/>
<rect x="2685.8" y="1619.2" width="23.8" height="14.1" fill="#ffdfc2" stroke="#ffe9d6" stroke-width="2" stroke-dasharray="5 4"/>
<rect x="2684.8" y="1622.6" width="25.8" height="10.7" fill="#faa755"/>
<rect x="2732.1" y="1389.5" width="23.9" height="188.8" fill="#e3d1ff" stroke="#a377e2" stroke-width="2.6" stroke-dasharray="6 4.5"/>
<rect x="2731.1" y="1577.3" width="25.9" height="56.0" fill="#9c6ade"/>
<rect x="2761.7" y="1620.3" width="25.8" height="13.0" fill="#ff6d3b"/>
<rect x="2762.7" y="1627.8" width="23.8" height="5.5" fill="#ffdfc2" stroke="#ffe9d6" stroke-width="2" stroke-dasharray="5 4"/>
<rect x="2761.7" y="1631.1" width="25.8" height="2.2" fill="#faa755"/>
<rect x="2809.0" y="1401.5" width="23.9" height="212.1" fill="#e3d1ff" stroke="#a377e2" stroke-width="2.6" stroke-dasharray="6 4.5"/>
<rect x="2808.0" y="1612.6" width="25.9" height="20.7" fill="#9c6ade"/>
<rect x="2838.6" y="1626.8" width="25.8" height="6.5" fill="#ff6d3b"/>
<rect x="2839.6" y="1631.7" width="23.8" height="1.6" fill="#ffdfc2" stroke="#ffe9d6" stroke-width="2" stroke-dasharray="5 4"/>
<rect x="2838.6" y="1632.4" width="25.8" height="0.9" fill="#faa755"/>
<rect x="2885.8" y="1451.1" width="23.9" height="182.2" fill="#e3d1ff" stroke="#a377e2" stroke-width="2.6" stroke-dasharray="6 4.5"/>
<rect x="2915.4" y="1630.3" width="25.8" height="3.0" fill="#ff6d3b"/>
<rect x="2916.4" y="1633.4" width="23.8" height="-0.1" fill="#ffdfc2" stroke="#ffe9d6" stroke-width="2" stroke-dasharray="5 4"/>
<text x="628.8" y="1640.9" text-anchor="end" font-size="24.5" fill="#7d838a" letter-spacing="0.9">0</text>
<text x="628.8" y="1554.3" text-anchor="end" font-size="24.5" fill="#7d838a" letter-spacing="0.9">100</text>
<text x="628.8" y="1467.8" text-anchor="end" font-size="24.5" fill="#7d838a" letter-spacing="0.9">200</text>
<text x="628.8" y="1381.2" text-anchor="end" font-size="24.5" fill="#7d838a" letter-spacing="0.9">300</text>
<text x="628.8" y="1294.6" text-anchor="end" font-size="24.5" fill="#7d838a" letter-spacing="0.9">400</text>
<text x="628.8" y="1208.0" text-anchor="end" font-size="24.5" fill="#7d838a" letter-spacing="0.9">500</text>
<text x="628.8" y="1121.5" text-anchor="end" font-size="24.5" fill="#7d838a" letter-spacing="0.9">600</text>
<text x="688.9" y="1654" text-anchor="end" font-size="24.5" fill="#73797f" letter-spacing="1.35" transform="rotate(-45 688.9 1654)">Nov 05</text>
<text x="765.8" y="1654" text-anchor="end" font-size="24.5" fill="#73797f" letter-spacing="1.35" transform="rotate(-45 765.8 1654)">Nov 06</text>
<text x="842.7" y="1654" text-anchor="end" font-size="24.5" fill="#73797f" letter-spacing="1.35" transform="rotate(-45 842.7 1654)">Nov 07</text>
<text x="919.5" y="1654" text-anchor="end" font-size="24.5" fill="#73797f" letter-spacing="1.35" transform="rotate(-45 919.5 1654)">Nov 08</text>
<text x="996.4" y="1654" text-anchor="end" font-size="24.5" fill="#73797f" letter-spacing="1.35" transform="rotate(-45 996.4 1654)">Nov 09</text>
<text x="1073.3" y="1654" text-anchor="end" font-size="24.5" fill="#73797f" letter-spacing="1.35" transform="rotate(-45 1073.3 1654)">Nov 10</text>
<text x="1150.2" y="1654" text-anchor="end" font-size="24.5" fill="#73797f" letter-spacing="1.35" transform="rotate(-45 1150.2 1654)">Nov 11</text>
<text x="1227.0" y="1654" text-anchor="end" font-size="24.5" fill="#73797f" letter-spacing="1.35" transform="rotate(-45 1227.0 1654)">Nov 12</text>
<text x="1303.9" y="1654" text-anchor="end" font-size="24.5" fill="#73797f" letter-spacing="1.35" transform="rotate(-45 1303.9 1654)">Nov 13</text>
<text x="1380.8" y="1654" text-anchor="end" font-size="24.5" fill="#73797f" letter-spacing="1.35" transform="rotate(-45 1380.8 1654)">Nov 14</text>
<text x="1457.6" y="1654" text-anchor="end" font-size="24.5" fill="#73797f" letter-spacing="1.35" transform="rotate(-45 1457.6 1654)">Nov 15</text>
<text x="1534.5" y="1654" text-anchor="end" font-size="24.5" fill="#73797f" letter-spacing="1.35" transform="rotate(-45 1534.5 1654)">Nov 16</text>
<text x="1611.4" y="1654" text-anchor="end" font-size="24.5" fill="#73797f" letter-spacing="1.35" transform="rotate(-45 1611.4 1654)">Nov 17</text>
<text x="1688.2" y="1654" text-anchor="end" font-size="24.5" fill="#73797f" letter-spacing="1.35" transform="rotate(-45 1688.2 1654)">Nov 18</text>
<text x="1765.1" y="1654" text-anchor="end" font-size="24.5" fill="#73797f" letter-spacing="1.35" transform="rotate(-45 1765.1 1654)">Nov 19</text>
<text x="1842.0" y="1654" text-anchor="end" font-size="24.5" fill="#73797f" letter-spacing="1.35" transform="rotate(-45 1842.0 1654)">Nov 20</text>
<text x="1918.9" y="1654" text-anchor="end" font-size="24.5" fill="#73797f" letter-spacing="1.35" transform="rotate(-45 1918.9 1654)">Nov 21</text>
<text x="1995.7" y="1654" text-anchor="end" font-size="24.5" fill="#73797f" letter-spacing="1.35" transform="rotate(-45 1995.7 1654)">Nov 22</text>
<text x="2072.6" y="1654" text-anchor="end" font-size="24.5" fill="#73797f" letter-spacing="1.35" transform="rotate(-45 2072.6 1654)">Nov 23</text>
<text x="2149.5" y="1654" text-anchor="end" font-size="24.5" fill="#73797f" letter-spacing="1.35" transform="rotate(-45 2149.5 1654)">Nov 24</text>
<text x="2226.3" y="1654" text-anchor="end" font-size="24.5" fill="#73797f" letter-spacing="1.35" transform="rotate(-45 2226.3 1654)">Nov 25</text>
<text x="2303.2" y="1654" text-anchor="end" font-size="24.5" fill="#73797f" letter-spacing="1.35" transform="rotate(-45 2303.2 1654)">Nov 26</text>
<text x="2380.1" y="1654" text-anchor="end" font-size="24.5" fill="#73797f" letter-spacing="1.35" transform="rotate(-45 2380.1 1654)">Nov 27</text>
<text x="2456.9" y="1654" text-anchor="end" font-size="24.5" fill="#73797f" letter-spacing="1.35" transform="rotate(-45 2456.9 1654)">Nov 28</text>
<text x="2533.8" y="1654" text-anchor="end" font-size="24.5" fill="#73797f" letter-spacing="1.35" transform="rotate(-45 2533.8 1654)">Nov 29</text>
<text x="2610.7" y="1654" text-anchor="end" font-size="24.5" fill="#73797f" letter-spacing="1.35" transform="rotate(-45 2610.7 1654)">Nov 30</text>
<text x="2687.6" y="1654" text-anchor="end" font-size="24.5" fill="#73797f" letter-spacing="1.35" transform="rotate(-45 2687.6 1654)">Dec 01</text>
<text x="2764.4" y="1654" text-anchor="end" font-size="24.5" fill="#73797f" letter-spacing="1.35" transform="rotate(-45 2764.4 1654)">Dec 02</text>
<text x="2841.3" y="1654" text-anchor="end" font-size="24.5" fill="#73797f" letter-spacing="1.35" transform="rotate(-45 2841.3 1654)">Dec 03</text>
<text x="2918.2" y="1654" text-anchor="end" font-size="24.5" fill="#73797f" letter-spacing="1.35" transform="rotate(-45 2918.2 1654)">Dec 04</text></svg>
<div style="position:absolute;left:576.4px;top:1754.8px;width:31.8px;height:31.8px;background:#9c6ade"></div>
<span style="position:absolute;white-space:pre;left:624.3px;top:1755.0px;font-size:27.5px;line-height:33.00px;font-weight:400;color:#202223;letter-spacing:0.000px;-webkit-text-stroke:0.3px #202223;transform:scaleX(1.0777);transform-origin:0 50%;">On-time</span>
<div style="position:absolute;left:763.0px;top:1754.8px;width:31.8px;height:31.8px;box-sizing:border-box;background:#e3d1ff;border:2px dashed #b48cf0"></div>
<span style="position:absolute;white-space:pre;left:813.0px;top:1755.0px;font-size:27.5px;line-height:33.00px;font-weight:400;color:#202223;letter-spacing:-0.000px;-webkit-text-stroke:0.3px #202223;transform:scaleX(1.0587);transform-origin:0 50%;">Trending on-time</span>
<div style="position:absolute;left:1065.0px;top:1754.8px;width:31.8px;height:31.8px;background:#ff6d3b"></div>
<span style="position:absolute;white-space:pre;left:1114.0px;top:1755.0px;font-size:27.5px;line-height:33.00px;font-weight:400;color:#202223;letter-spacing:0.000px;-webkit-text-stroke:0.3px #202223;transform:scaleX(1.0286);transform-origin:0 50%;">Overdue</span>
<div style="position:absolute;left:1255.7px;top:1754.8px;width:31.8px;height:31.8px;background:#faa755"></div>
<span style="position:absolute;white-space:pre;left:1304.7px;top:1755.0px;font-size:27.5px;line-height:33.00px;font-weight:400;color:#202223;letter-spacing:0.000px;-webkit-text-stroke:0.3px #202223;transform:scaleX(1.0144);transform-origin:0 50%;">Late</span>
<div style="position:absolute;left:1392.0px;top:1754.8px;width:31.8px;height:31.8px;box-sizing:border-box;background:#ffdfc2;border:2px dashed #f7a35c"></div>
<span style="position:absolute;white-space:pre;left:1441.0px;top:1755.0px;font-size:27.5px;line-height:33.00px;font-weight:400;color:#202223;letter-spacing:0.000px;-webkit-text-stroke:0.3px #202223;transform:scaleX(1.0470);transform-origin:0 50%;">Trending late</span>
<div class="card" style="left:536.6px;top:1872px;width:1205.4px;height:300px"></div>
<span style="position:absolute;white-space:pre;left:577.0px;top:1919.9px;font-size:30px;line-height:36.00px;font-weight:400;color:#202223;letter-spacing:0.808px;-webkit-text-stroke:0.95px #202223;transform:scaleX(1.0850);transform-origin:0 50%;">Delivery performance</span>
<div style="position:absolute;left:916px;top:1921px;width:32.4px;height:32.4px;border-radius:50%;background:#8c9196"></div>
<span style="position:absolute;white-space:pre;left:924.9px;top:1922.8px;font-size:24px;line-height:28.80px;font-weight:700;color:#fff;letter-spacing:0.000px;">?</span>
<span style="position:absolute;white-space:pre;left:577.0px;top:2005.5px;font-size:27.5px;line-height:33.00px;font-weight:400;color:#202223;letter-spacing:0.000px;-webkit-text-stroke:0.3px #202223;transform:scaleX(1.0374);transform-origin:0 50%;">Same as expected</span>
<span style="position:absolute;white-space:pre;left:1605.8px;top:2005.5px;font-size:27.5px;line-height:33.00px;font-weight:400;color:#202223;letter-spacing:0.000px;-webkit-text-stroke:0.3px #202223;transform:scaleX(1.0259);transform-origin:0 50%;">51.99%</span>
<span style="position:absolute;white-space:pre;left:577.2px;top:2064.3px;font-size:27.5px;line-height:33.00px;font-weight:400;color:#202223;letter-spacing:0.000px;-webkit-text-stroke:0.3px #202223;transform:scaleX(0.9831);transform-origin:0 50%;">Early</span>
<span style="position:absolute;white-space:pre;left:1602.0px;top:2064.3px;font-size:27.5px;line-height:33.00px;font-weight:400;color:#202223;letter-spacing:0.000px;-webkit-text-stroke:0.3px #202223;transform:scaleX(1.0667);transform-origin:0 50%;">35.95%</span>
<span style="position:absolute;white-space:pre;left:577.0px;top:2125.1px;font-size:27.5px;line-height:33.00px;font-weight:400;color:#202223;letter-spacing:0.000px;-webkit-text-stroke:0.3px #202223;transform:scaleX(1.0144);transform-origin:0 50%;">Late</span>
<span style="position:absolute;white-space:pre;left:1605.8px;top:2125.1px;font-size:27.5px;line-height:33.00px;font-weight:400;color:#202223;letter-spacing:0.000px;-webkit-text-stroke:0.3px #202223;transform:scaleX(1.0259);transform-origin:0 50%;">12.05%</span>
<div class="card" style="left:1782px;top:1872px;width:1206px;height:300px"></div>
<span style="position:absolute;white-space:pre;left:1823.0px;top:1919.9px;font-size:30px;line-height:36.00px;font-weight:400;color:#202223;letter-spacing:1.074px;-webkit-text-stroke:0.95px #202223;transform:scaleX(1.0850);transform-origin:0 50%;">On-time status distribution</span>
<div style="position:absolute;left:2063.3px;top:2019.6px;width:2.0px;height:120.4px;background:#f2f4f6"></div>
<div style="position:absolute;left:2285.2px;top:2019.6px;width:2.0px;height:120.4px;background:#f2f4f6"></div>
<div style="position:absolute;left:2505.5px;top:2019.6px;width:2.0px;height:120.4px;background:#f2f4f6"></div>
<div style="position:absolute;left:2726.8px;top:2019.6px;width:2.0px;height:120.4px;background:#f2f4f6"></div>
<div style="position:absolute;left:1842.0px;top:2019.6px;width:2.0px;height:120.4px;background:#e6e9ed"></div>
<span style="position:absolute;white-space:pre;left:1853.0px;top:2047.3px;font-size:23.5px;line-height:28.20px;font-weight:400;color:#6f7b87;letter-spacing:0.172px;-webkit-text-stroke:0.2px #6f7b87;transform:scaleX(1.0850);transform-origin:0 50%;">On-time</span>
<div style="position:absolute;left:1843.0px;top:2089.0px;width:834.5px;height:51.0px;background:#9c6ade"></div>
<span style="position:absolute;white-space:pre;left:2688.0px;top:2095.8px;font-size:23.5px;line-height:28.20px;font-weight:400;color:#202223;letter-spacing:0.000px;-webkit-text-stroke:0.2px #202223;transform:scaleX(1.0200);transform-origin:0 50%;">75.51%</span>
<div style="position:absolute;left:2884.3px;top:1891.4px;width:119.8px;height:119.8px;border-radius:50%;background:#ff6b2b;box-shadow:0 8px 24px rgba(0,0,0,.10)"></div>
<svg style="position:absolute;left:2900.0px;top:1920.0px;" width="90.0" height="70.0" viewBox="2900 1920 90 70" preserveAspectRatio="none"><path fill="#fff" d="M2912.9 1935.9 L2968 1929.3 L2971.9 1963.6 L2951.9 1966.4 L2944.7 1978.6 L2936.4 1968 L2915.9 1970.2 Z"/></svg>
</div>
<div id="frame"></div>
</body></html>
